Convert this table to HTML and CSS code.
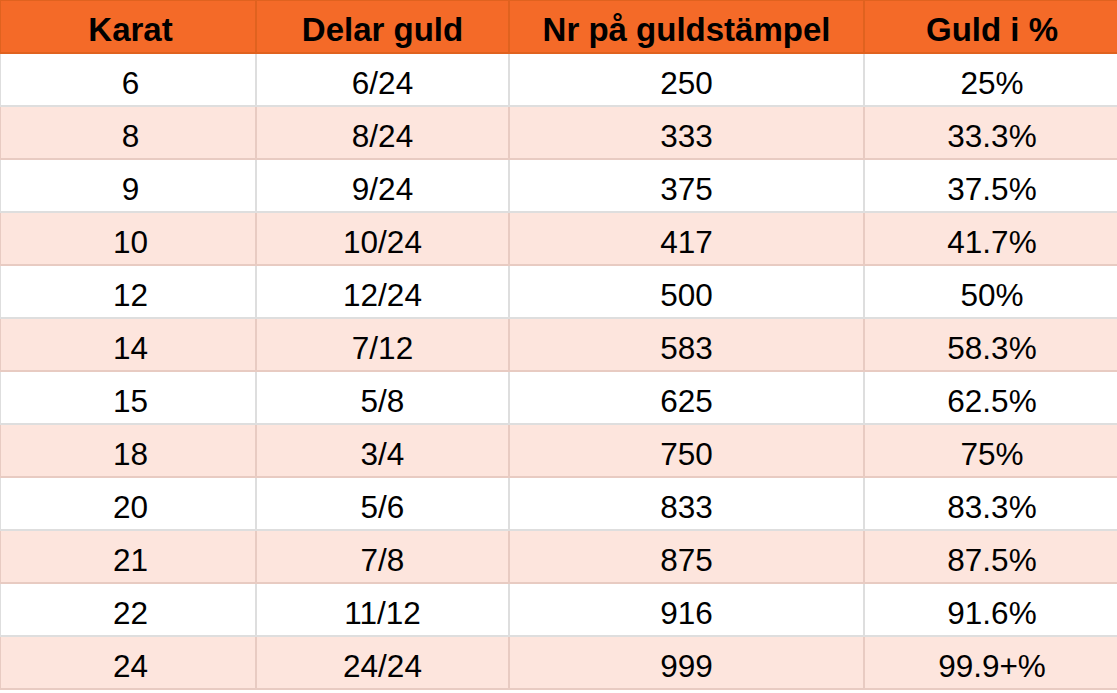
FILE: index.html
```html
<!DOCTYPE html>
<html lang="sv">
<head>
<meta charset="utf-8">
<title>Karat</title>
<link rel="stylesheet" href="styles.css">
</head>
<body>
<table class="gold">
  <colgroup>
    <col class="c1"><col class="c2"><col class="c3"><col class="c4">
  </colgroup>
  <thead>
    <tr><th>Karat</th><th>Delar guld</th><th>Nr på guldstämpel</th><th>Guld i %</th></tr>
  </thead>
  <tbody>
    <tr class="w"><td>6</td><td>6/24</td><td>250</td><td>25%</td></tr>
    <tr class="p"><td>8</td><td>8/24</td><td>333</td><td>33.3%</td></tr>
    <tr class="w"><td>9</td><td>9/24</td><td>375</td><td>37.5%</td></tr>
    <tr class="p"><td>10</td><td>10/24</td><td>417</td><td>41.7%</td></tr>
    <tr class="w"><td>12</td><td>12/24</td><td>500</td><td>50%</td></tr>
    <tr class="p"><td>14</td><td>7/12</td><td>583</td><td>58.3%</td></tr>
    <tr class="w"><td>15</td><td>5/8</td><td>625</td><td>62.5%</td></tr>
    <tr class="p"><td>18</td><td>3/4</td><td>750</td><td>75%</td></tr>
    <tr class="w"><td>20</td><td>5/6</td><td>833</td><td>83.3%</td></tr>
    <tr class="p"><td>21</td><td>7/8</td><td>875</td><td>87.5%</td></tr>
    <tr class="w"><td>22</td><td>11/12</td><td>916</td><td>91.6%</td></tr>
    <tr class="p"><td>24</td><td>24/24</td><td>999</td><td>99.9+%</td></tr>
  </tbody>
</table>
</body>
</html>
```
FILE: styles.css
```css
html, body {
  margin: 0;
  padding: 0;
  background: #ffffff;
  overflow: hidden;
}
.gold {
  border-collapse: collapse;
  table-layout: fixed;
  width: 1120px;
  margin: -1px 0 0 -1px;
  font-family: "Liberation Sans", Arial, sans-serif;
  color: #000;
}
.c1 { width: 256px; }
.c2 { width: 253px; }
.c3 { width: 355px; }
.c4 { width: 256px; }
.gold th, .gold td {
  height: 53px;
  padding: 6px 0 0 0;
  box-sizing: border-box;
  text-align: center;
  vertical-align: middle;
  font-size: 31.5px;
  line-height: 36px;
}
.gold th:first-child, .gold td:first-child {
  padding-left: 5px;
}
.gold th {
  background: #f46a28;
  border: 2px solid #e0621f;
  font-weight: bold;
  font-size: 33px;
}
.gold tr.w td {
  background: #ffffff;
  border: 2px solid #dedede;
}
.gold tr.p td {
  background: #fde5dd;
  border: 2px solid #e8cbc2;
}
```
